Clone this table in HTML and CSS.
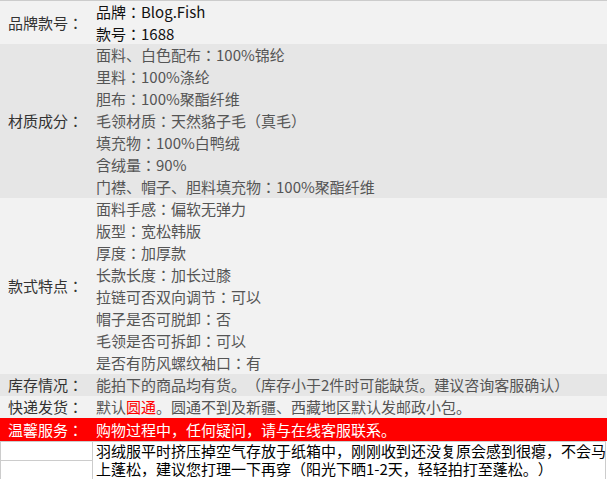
FILE: index.html
```html
<!DOCTYPE html>
<html>
<head>
<meta charset="utf-8">
<link rel="stylesheet" href="styles.css">
</head>
<body>
<div class="sheet">
  <table class="spec">
    <tr class="light">
      <td class="label">品牌款号：</td>
      <td class="value first">品牌：Blog.Fish<br>款号：1688</td>
    </tr>
    <tr class="mid">
      <td class="label">材质成分：</td>
      <td class="value">面料、白色配布：100%锦纶<br>里料：100%涤纶<br>胆布：100%聚酯纤维<br>毛领材质：天然貉子毛（真毛）<br>填充物：100%白鸭绒<br>含绒量：90%<br>门襟、帽子、胆料填充物：100%聚酯纤维</td>
    </tr>
    <tr class="light">
      <td class="label">款式特点：</td>
      <td class="value">面料手感：偏软无弹力<br>版型：宽松韩版<br>厚度：加厚款<br>长款长度：加长过膝<br>拉链可否双向调节：可以<br>帽子是否可脱卸：否<br>毛领是否可拆卸：可以<br>是否有防风螺纹袖口：有</td>
    </tr>
    <tr class="mid">
      <td class="label">库存情况：</td>
      <td class="value">能拍下的商品均有货。（库存小于2件时可能缺货。建议咨询客服确认）</td>
    </tr>
    <tr class="light">
      <td class="label">快递发货：</td>
      <td class="value">默认<span class="red">圆通</span>。圆通不到及新疆、西藏地区默认发邮政小包。</td>
    </tr>
    <tr class="alert">
      <td class="label">温馨服务：</td>
      <td class="value">购物过程中，任何疑问，请与在线客服联系。</td>
    </tr>
  </table>
  <table class="note">
    <colgroup>
      <col class="note-left">
      <col class="note-right">
    </colgroup>
    <tr>
      <td class="blank"></td>
      <td class="text" rowspan="2">羽绒服平时挤压掉空气存放于纸箱中，刚刚收到还没复原会感到很瘪，不会马<br>上蓬松，建议您打理一下再穿（阳光下晒1-2天，轻轻拍打至蓬松。）</td>
    </tr>
    <tr>
      <td class="blank"></td>
    </tr>
  </table>
</div>
</body>
</html>
```

FILE: styles.css
```css
html, body {
  margin: 0;
  padding: 0;
  background: #ffffff;
}

.sheet {
  width: 609px;
  font-family: "Noto Sans CJK JP", "Microsoft YaHei", sans-serif;
  font-size: 15px;
  text-spacing-trim: space-all;
}

.spec {
  width: 607px;
  border-collapse: collapse;
  border-top: 1px solid #cccccc;
}

.spec td {
  padding: 0;
  line-height: 22px;
  vertical-align: middle;
}

.spec .label {
  width: 84px;
  padding-left: 8px;
  color: #333333;
  white-space: nowrap;
}

.spec .value {
  padding-left: 4px;
  color: #555555;
  white-space: nowrap;
}

.spec .value.first {
  color: #111111;
  line-height: 21.5px;
}

.light td {
  background: #f2f2f2;
}

.mid td {
  background: #e6e6e6;
}

.alert td {
  background: #ff0000;
  height: 23px;
}

.spec .alert td {
  color: #ffffff;
}

.red {
  color: #ff0000;
}

.note {
  width: 606px;
  border-collapse: collapse;
  table-layout: fixed;
}

.note-left {
  width: 92px;
}

.note td {
  border: 1px solid #cccccc;
  padding: 0;
}

.note .blank {
  height: 18px;
}

.note .text {
  padding: 0 0 0 3px;
  color: #000000;
  font-size: 15px;
  line-height: 18px;
  white-space: nowrap;
  vertical-align: top;
}
```
